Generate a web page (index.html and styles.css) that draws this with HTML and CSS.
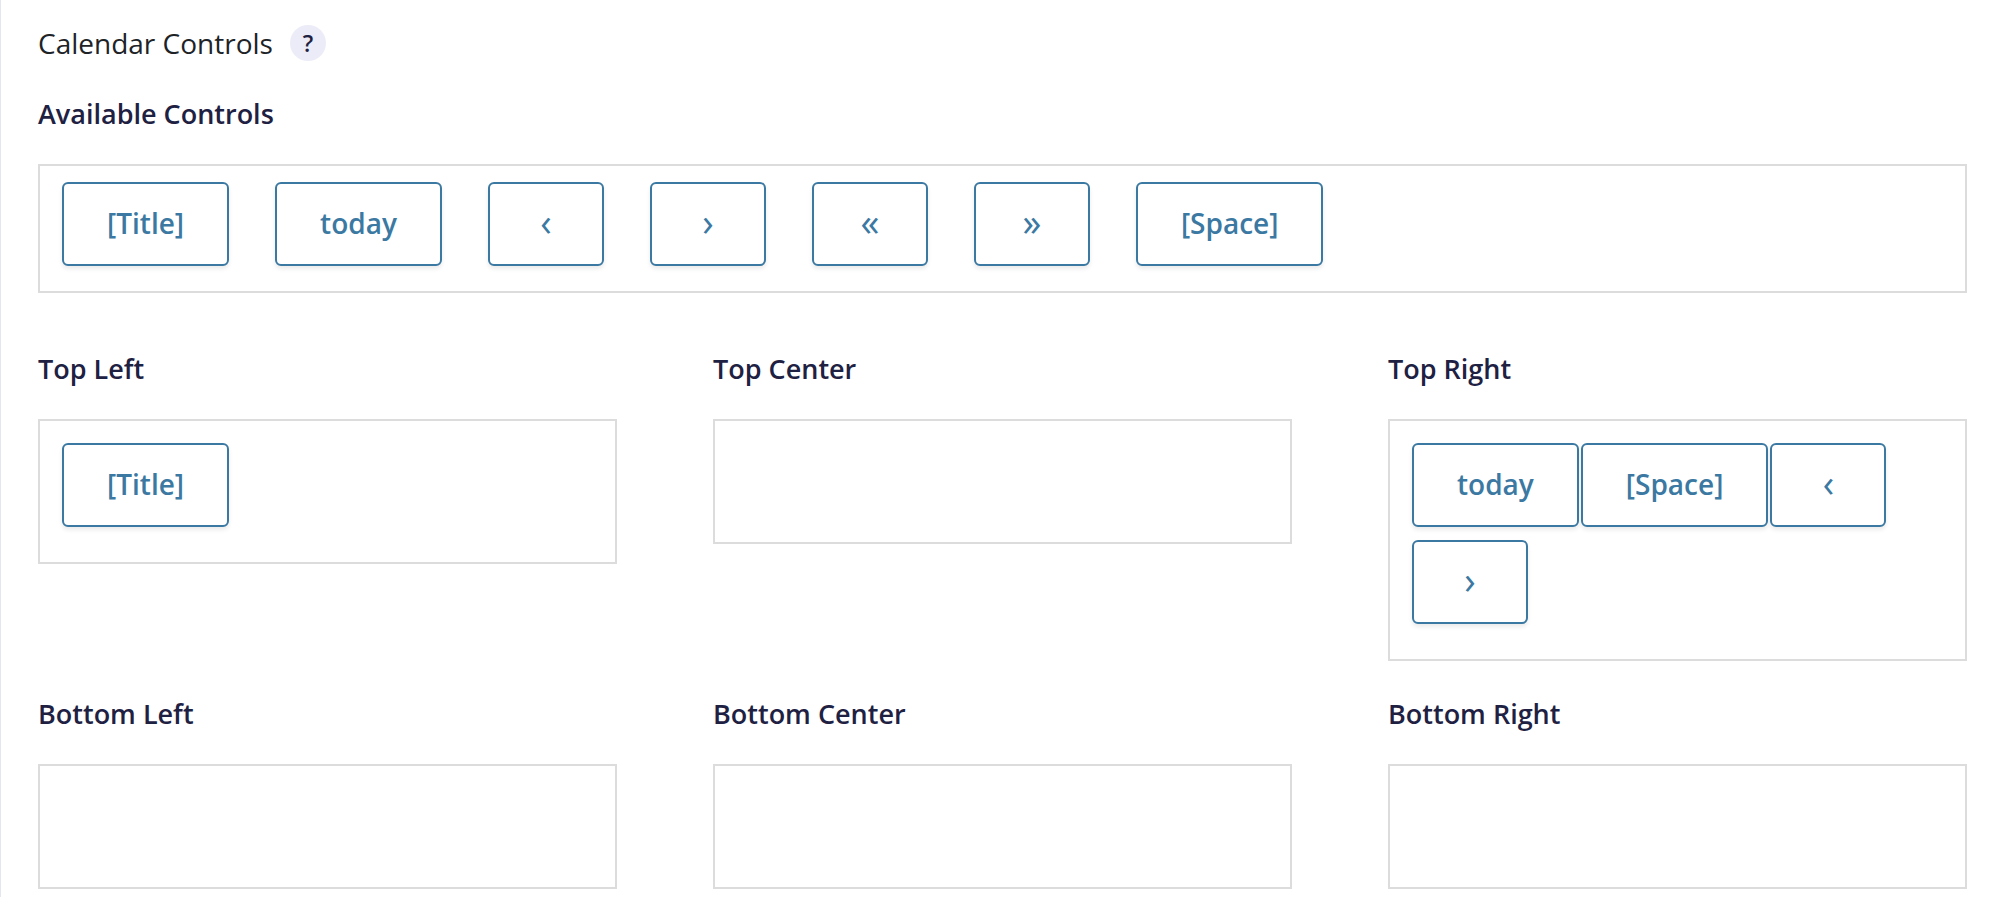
FILE: index.html
```html
<!DOCTYPE html>
<html lang="en">
<head>
<meta charset="utf-8">
<title>Calendar Controls</title>
<link rel="stylesheet" href="styles.css">
</head>
<body>
<div class="page">
  <div class="section-head">
    <span class="title">Calendar Controls</span>
    <span class="help">?</span>
  </div>

  <div class="label">Available Controls</div>
  <div class="pool">
    <span class="btn">[Title]</span>
    <span class="btn">today</span>
    <span class="btn chev">&lsaquo;</span>
    <span class="btn chev">&rsaquo;</span>
    <span class="btn chev">&laquo;</span>
    <span class="btn chev">&raquo;</span>
    <span class="btn">[Space]</span>
  </div>

  <div class="grid">
    <div class="col">
      <div class="label">Top Left</div>
      <div class="zone">
        <span class="btn">[Title]</span>
      </div>
    </div>
    <div class="col">
      <div class="label">Top Center</div>
      <div class="zone"></div>
    </div>
    <div class="col">
      <div class="label">Top Right</div>
      <div class="zone">
        <span class="btn">today</span>
        <span class="btn">[Space]</span>
        <span class="btn chev">&lsaquo;</span>
        <span class="btn chev">&rsaquo;</span>
      </div>
    </div>
    <div class="col">
      <div class="label">Bottom Left</div>
      <div class="zone"></div>
    </div>
    <div class="col">
      <div class="label">Bottom Center</div>
      <div class="zone"></div>
    </div>
    <div class="col">
      <div class="label">Bottom Right</div>
      <div class="zone"></div>
    </div>
  </div>
</div>
</body>
</html>
```

FILE: styles.css
```css
html, body {
  margin: 0;
  padding: 0;
  background: #ffffff;
}

body {
  font-family: "Open Sans", "Noto Sans", "Liberation Sans", sans-serif;
  color: #1e2142;
}

.page {
  box-sizing: border-box;
  min-height: 100vh;
  border-left: 1px solid #e4e4f2;
  padding: 23px 28px 0 37px;
}

.section-head {
  display: flex;
  align-items: center;
  gap: 17px;
  height: 40px;
  margin-bottom: 31px;
}

.title {
  font-size: 28px;
  line-height: 40px;
  font-weight: 500;
  color: #1d2327;
}

.help {
  display: inline-flex;
  align-items: center;
  justify-content: center;
  width: 36px;
  height: 36px;
  border-radius: 50%;
  background: #ececf8;
  color: #1e2142;
  font-size: 23px;
  font-weight: 600;
  line-height: 1;
}

.label {
  font-size: 27px;
  line-height: 40px;
  font-weight: 600;
  color: #1e2142;
  margin-bottom: 30px;
}

.pool {
  display: flex;
  flex-wrap: wrap;
  column-gap: 46px;
  border: 2px solid #dcdcdc;
  padding: 16px 22px 11px;
}

.grid {
  display: grid;
  grid-template-columns: repeat(3, 1fr);
  column-gap: 96px;
  row-gap: 33px;
  margin-top: 56px;
}

.zone {
  box-sizing: border-box;
  display: flex;
  flex-wrap: wrap;
  align-content: flex-start;
  column-gap: 2px;
  min-height: 125px;
  border: 2px solid #dcdcdc;
  padding: 22px 22px 22px;
}

.btn {
  box-sizing: border-box;
  display: inline-flex;
  align-items: center;
  justify-content: center;
  height: 84px;
  min-width: 116px;
  padding: 0 43px 2px;
  margin-bottom: 13px;
  border: 2px solid #3b79a2;
  border-radius: 6px;
  background: #ffffff;
  box-shadow: 0 3px 4px rgba(0, 0, 0, 0.08);
  color: #3b79a2;
  font-size: 28px;
  font-weight: 600;
  line-height: 1;
  white-space: nowrap;
}

.pool .btn {
  margin-bottom: 14px;
}

.btn.chev {
  font-size: 38px;
  font-weight: 400;
  padding-bottom: 6px;
}
```
